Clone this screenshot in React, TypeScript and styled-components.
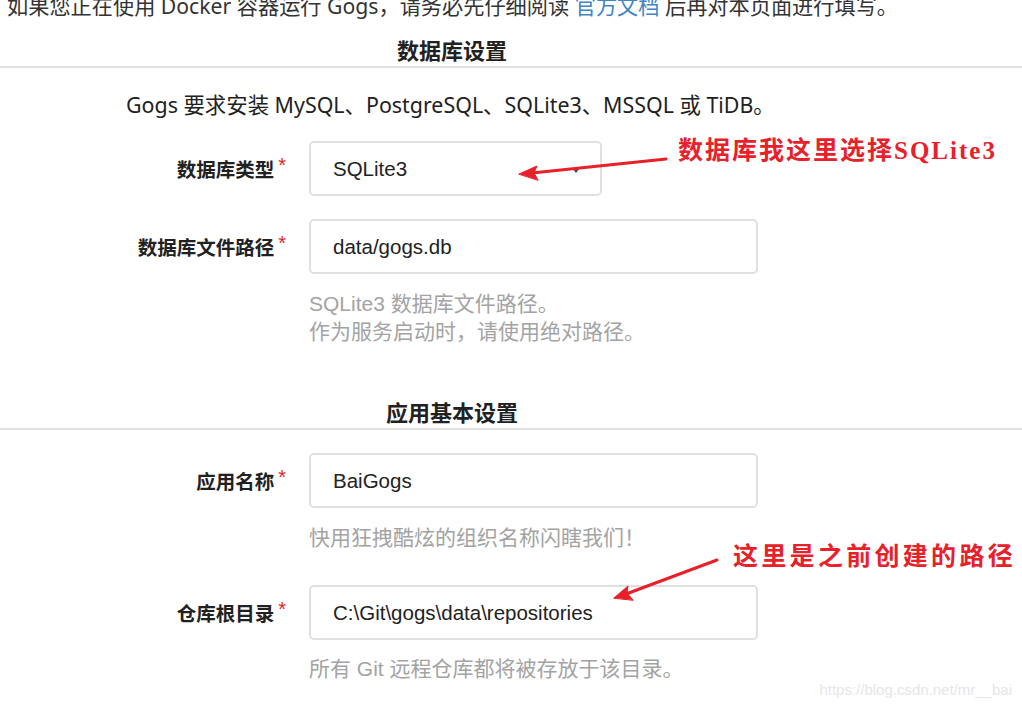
import { styled, createGlobalStyle } from 'styled-components';

const GlobalStyle = createGlobalStyle`
    html, body {
        margin: 0;
        padding: 0;
        background: #ffffff;
    }
    body {
        font-family: "Noto Sans CJK SC", "Liberation Sans", sans-serif;
        color: #212121;
    }
`;

// Whole screenshot area
const Page = styled.div`
    position: relative;
    width: 1022px;
    height: 707px;
    overflow: hidden;
    background: #fff;
`;

// Intro sentence cut off at the top edge
const Intro = styled.p`
    margin: -8px 0 0 7px;
    font-family: "Noto Sans", "Noto Sans CJK SC", sans-serif;
    font-size: 21.2px;
    line-height: 28px;
    white-space: nowrap;
    color: #333;

    a {
        color: #4183c4;
        text-decoration: none;
    }
`;

// Section heading with the grey divider under it
const SectionTitle = styled.h3<{ $top: number }>`
    margin: ${p => p.$top}px 0 0;
    padding: 0 118px 3px 0;
    font-size: 22px;
    font-weight: 700;
    line-height: 28px;
    text-align: center;
    color: #212121;
    border-bottom: 2px solid #e2e2e2;
`;

const Notice = styled.p`
    margin: 23px 0 0 126px;
    font-family: "Noto Sans", "Noto Sans CJK SC", sans-serif;
    font-size: 21.4px;
    line-height: 28px;
    color: #212121;
    white-space: nowrap;
`;

// One label + field row
const Row = styled.div<{ $top: number }>`
    display: flex;
    align-items: center;
    gap: 23px;
    margin-top: ${p => p.$top}px;
`;

const Label = styled.label`
    width: 286px;
    text-align: right;
    font-size: 19.5px;
    font-weight: 700;
    color: #212121;
    line-height: 28px;
    white-space: nowrap;
`;

const Required = styled.span`
    display: inline-block;
    margin-left: 4px;
    vertical-align: top;
    margin-top: -4px;
    font-family: "Liberation Sans", sans-serif;
    font-size: 20px;
    font-weight: 400;
    color: #db2828;
`;

const Field = styled.div<{ $width: number }>`
    position: relative;
    box-sizing: border-box;
    width: ${p => p.$width}px;
    height: 55px;
    padding: 0 22px;
    display: flex;
    align-items: center;
    border: 2px solid #e0e0e0;
    border-radius: 5px;
    background: #fff;
    font-family: "Liberation Sans", Arial, sans-serif;
    font-size: 20.5px;
    color: #222;
    white-space: nowrap;
`;

const Caret = styled.span`
    position: absolute;
    right: 21px;
    top: 26px;
    width: 0;
    height: 0;
    border-left: 3px solid transparent;
    border-right: 3px solid transparent;
    border-top: 4px solid #444;
`;

const Help = styled.p<{ $top: number }>`
    margin: ${p => p.$top}px 0 0 309px;
    font-family: "Liberation Sans", "Noto Sans CJK SC", sans-serif;
    font-size: 21px;
    line-height: 28px;
    color: #a3a3a3;
    white-space: nowrap;
`;

// Red hand-written notes laid over the screenshot
const Note = styled.div<{ $x: number; $y: number; $spacing: number }>`
    position: absolute;
    left: ${p => p.$x}px;
    top: ${p => p.$y}px;
    font-family: "Liberation Serif", "Noto Sans CJK SC", serif;
    font-size: 25px;
    font-weight: 700;
    letter-spacing: ${p => p.$spacing}px;
    line-height: 30px;
    color: #e8202a;
    white-space: nowrap;
`;

const Arrows = styled.svg`
    position: absolute;
    left: 0;
    top: 0;
    pointer-events: none;
`;

const Watermark = styled.div`
    position: absolute;
    right: 10px;
    bottom: 9px;
    font-family: "Liberation Sans", Arial, sans-serif;
    font-size: 15px;
    color: #e6e6e6;
`;

export default function App() {
    return (
        <>
            <GlobalStyle />
            <Page>
                <Intro>
                    如果您正在使用 Docker 容器运行 Gogs，请务必先仔细阅读 <a href="#">官方文档</a> 后再对本页面进行填写。
                </Intro>

                {/* Database settings */}
                <SectionTitle $top={15}>数据库设置</SectionTitle>
                <Notice>Gogs 要求安装 MySQL、PostgreSQL、SQLite3、MSSQL 或 TiDB。</Notice>
                <Row $top={22}>
                    <Label>数据库类型<Required>*</Required></Label>
                    <Field $width={293}>
                        SQLite3
                        <Caret />
                    </Field>
                </Row>
                <Row $top={23}>
                    <Label>数据库文件路径<Required>*</Required></Label>
                    <Field $width={449}>data/gogs.db</Field>
                </Row>
                <Help $top={16}>
                    SQLite3 数据库文件路径。<br />
                    作为服务启动时，请使用绝对路径。
                </Help>

                {/* General application settings */}
                <SectionTitle $top={51}>应用基本设置</SectionTitle>
                <Row $top={23}>
                    <Label>应用名称<Required>*</Required></Label>
                    <Field $width={449}>BaiGogs</Field>
                </Row>
                <Help $top={16}>快用狂拽酷炫的组织名称闪瞎我们！</Help>
                <Row $top={33}>
                    <Label>仓库根目录<Required>*</Required></Label>
                    <Field $width={449}>C:\Git\gogs\data\repositories</Field>
                </Row>
                <Help $top={15}>所有 Git 远程仓库都将被存放于该目录。</Help>

                {/* annotations */}
                <Note $x={678} $y={136} $spacing={2}>数据库我这里选择SQLite3</Note>
                <Note $x={733} $y={542} $spacing={3.3}>这里是之前创建的路径</Note>
                <Arrows width="1022" height="707" viewBox="0 0 1022 707">
                    <g fill="#e8202a" stroke="#e8202a" strokeLinecap="round">
                        <line x1="666" y1="159" x2="532" y2="173" strokeWidth="3" />
                        <polygon points="519,174 537,166 534,173 538,180" strokeWidth="1" />
                        <line x1="717" y1="560" x2="626" y2="594" strokeWidth="3" />
                        <polygon points="614,598 628,586 627,593 633,600" strokeWidth="1" />
                    </g>
                </Arrows>
                <Watermark>https://blog.csdn.net/mr__bai</Watermark>
            </Page>
        </>
    );
}
